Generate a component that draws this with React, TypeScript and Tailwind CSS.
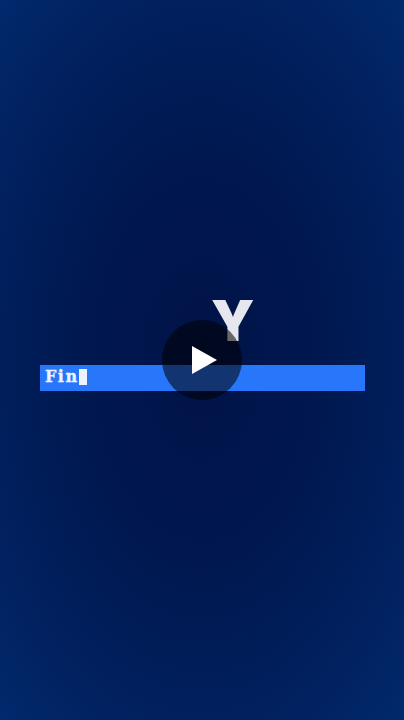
export default function App() {
  return (
    <div className="relative h-[720px] w-[404px] overflow-hidden bg-[radial-gradient(ellipse_75%_70%_at_50%_50%,#001348_0%,#00184f_40%,#01205e_72%,#012a6e_100%)] font-['Liberation_Sans',sans-serif]">
      {/* Title being typed */}
      <div className="flex flex-col pl-10 pt-[288px]">
        <div className="ml-[171px] h-[77px] font-['Inter',sans-serif] text-[56px] font-black leading-[66px] text-[#e6e6ee]">Y</div>
        <div className="flex h-[26px] w-[325px] items-center bg-[#2877fb] pl-[5px]">
          <span className="mb-[3px] w-[34px] font-['DejaVu_Serif',serif] text-[16px] font-bold leading-none tracking-[1.5px] text-[#eef4ff] [-webkit-text-stroke:0.3px_#eef4ff]">Fin</span>
          <span className="mb-[2px] h-4 w-2 bg-[#eef4ff]" />
        </div>
      </div>

      {/* Play button */}
      <div className="absolute left-[162px] top-[320px] flex h-20 w-20 items-center justify-center rounded-full bg-black/55">
        <svg width="25" height="28" viewBox="0 0 25 28" className="ml-[5px]">
          <path d="M0 0 L25 14 L0 28 Z" fill="#fff" />
        </svg>
      </div>
    </div>
  )
}
